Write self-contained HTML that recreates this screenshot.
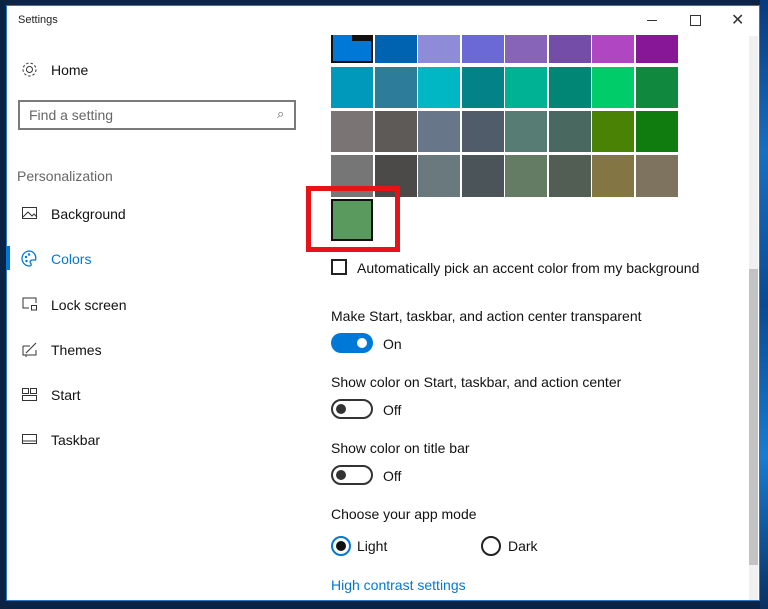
<!DOCTYPE html><html><head><style>
body{margin:0;width:768px;height:609px;background:#0b2446;position:relative;overflow:hidden;font-family:"Liberation Sans",sans-serif;}
#win{position:absolute;left:6px;top:5px;width:754px;height:596px;background:#fff;border:1px solid #2b78c9;box-sizing:border-box;}
.a{position:absolute;white-space:nowrap;}
.sw{position:absolute;width:42px;height:42px;}
.t{font-size:14px;color:#111;}
</style></head><body>
<div style="position:absolute;right:0;top:0;width:8px;height:609px;background:linear-gradient(#0a3a7a,#1a6fc0,#0b4a90,#1a7cd0,#0a3060)"></div>
<div id="win"></div>
<div class="a" style="left:18px;top:14px;font-size:11px;color:#222">Settings</div>
<div class="a" style="left:647px;top:20px;width:10px;height:1px;background:#333"></div>
<div class="a" style="left:690px;top:15px;width:9px;height:9px;border:1px solid #333"></div>
<div class="a" style="left:731px;top:10px;font-size:16px;color:#333">✕</div>
<svg class="a" style="left:21px;top:61px" width="17" height="17" viewBox="0 0 17 17"><circle cx="8.5" cy="8.5" r="3" fill="none" stroke="#333"/><circle cx="8.5" cy="8.5" r="6.5" fill="none" stroke="#333" stroke-dasharray="2.5 2"/></svg>
<div class="a t" style="left:51px;top:62px">Home</div>
<div class="a" style="left:18px;top:100px;width:278px;height:30px;border:2px solid #7a7a7a;box-sizing:border-box"></div>
<div class="a" style="left:29px;top:107px;font-size:14px;color:#666">Find a setting</div>
<div class="a" style="left:277px;top:106px;font-size:13px;color:#666">⌕</div>
<div class="a" style="left:17px;top:168px;font-size:14px;color:#666">Personalization</div>
<svg class="a" style="left:22px;top:207px" width="16" height="13"><rect x="0.5" y="0.5" width="14" height="11" fill="none" stroke="#333"/><path d="M1 10l5-5 4 4 2-2 3 3" fill="none" stroke="#333"/></svg>
<div class="a t" style="left:51px;top:206px">Background</div>
<div class="a" style="left:6px;top:246px;width:4px;height:24px;background:#0078d7"></div>
<svg class="a" style="left:21px;top:250px" width="17" height="17"><path d="M8.5 1a7.5 7.5 0 1 0 0 15c2 0 2-2 1-3s0-3 2-3h3a7 7 0 0 0-6-9z" fill="none" stroke="#0078d7" stroke-width="1.3"/><circle cx="5" cy="7" r="1.2" fill="#0078d7"/><circle cx="8" cy="4.5" r="1.2" fill="#0078d7"/><circle cx="5.5" cy="11" r="1.2" fill="#0078d7"/></svg>
<div class="a" style="left:51px;top:251px;font-size:14px;color:#0078d7">Colors</div>
<svg class="a" style="left:22px;top:297px" width="16" height="14"><path d="M14 6V1H1v10h6" fill="none" stroke="#333"/><rect x="9.5" y="8.5" width="5" height="4.5" fill="none" stroke="#333"/></svg>
<div class="a t" style="left:51px;top:297px">Lock screen</div>
<svg class="a" style="left:22px;top:342px" width="16" height="15"><path d="M1 4h7M1 4v9h13V8M4 13v2M4 11l3-3 7-7" fill="none" stroke="#333"/></svg>
<div class="a t" style="left:51px;top:342px">Themes</div>
<svg class="a" style="left:22px;top:388px" width="16" height="14"><rect x="0.5" y="0.5" width="6" height="5" fill="none" stroke="#333"/><rect x="8.5" y="0.5" width="6" height="5" fill="none" stroke="#333"/><rect x="0.5" y="7.5" width="14" height="5" fill="none" stroke="#333"/></svg>
<div class="a t" style="left:51px;top:387px">Start</div>
<svg class="a" style="left:22px;top:434px" width="16" height="11"><rect x="0.5" y="0.5" width="14" height="9" fill="none" stroke="#333"/><path d="M1 7h13" stroke="#333"/></svg>
<div class="a t" style="left:51px;top:432px">Taskbar</div>

<div id="grid"></div>
<div class="a" style="left:306px;top:186px;width:94px;height:66px;border:5px solid #e8131a;box-sizing:border-box"></div>
<div class="sw" style="left:331px;top:199px;background:#5a9a5f;border:2px solid #111;box-sizing:border-box"></div>
<div class="a" style="left:331px;top:259px;width:16px;height:16px;border:2px solid #222;box-sizing:border-box"></div>
<div class="a t" style="left:357px;top:260px">Automatically pick an accent color from my background</div>
<div class="a t" style="left:331px;top:308px">Make Start, taskbar, and action center transparent</div>
<div class="a" style="left:331px;top:333px;width:42px;height:20px;border-radius:10px;background:#0078d7"></div>
<div class="a" style="left:357px;top:338px;width:10px;height:10px;border-radius:5px;background:#fff"></div>
<div class="a t" style="left:383px;top:336px">On</div>
<div class="a t" style="left:331px;top:374px">Show color on Start, taskbar, and action center</div>
<div class="a" style="left:331px;top:399px;width:42px;height:20px;border-radius:10px;border:2px solid #333;box-sizing:border-box"></div>
<div class="a" style="left:336px;top:404px;width:10px;height:10px;border-radius:5px;background:#333"></div>
<div class="a t" style="left:383px;top:402px">Off</div>
<div class="a t" style="left:331px;top:440px">Show color on title bar</div>
<div class="a" style="left:331px;top:465px;width:42px;height:20px;border-radius:10px;border:2px solid #333;box-sizing:border-box"></div>
<div class="a" style="left:336px;top:470px;width:10px;height:10px;border-radius:5px;background:#333"></div>
<div class="a t" style="left:383px;top:468px">Off</div>
<div class="a t" style="left:331px;top:506px">Choose your app mode</div>
<div class="a" style="left:331px;top:536px;width:20px;height:20px;border-radius:10px;border:2px solid #0078d7;box-sizing:border-box"></div>
<div class="a" style="left:336px;top:541px;width:10px;height:10px;border-radius:5px;background:#111"></div>
<div class="a t" style="left:357px;top:538px">Light</div>
<div class="a" style="left:481px;top:536px;width:20px;height:20px;border-radius:10px;border:2px solid #222;box-sizing:border-box"></div>
<div class="a t" style="left:508px;top:538px">Dark</div>
<div class="a" style="left:331px;top:577px;font-size:14px;color:#0078d7">High contrast settings</div>
<div class="a" style="left:749px;top:36px;width:9px;height:564px;background:#f0f0f0"></div>
<div class="a" style="left:749px;top:269px;width:9px;height:296px;background:#c2c2c2"></div>
<script>
var c=[["#0078d7","#0063b1","#8e8cd8","#6b69d6","#8764b8","#744da9","#b146c2","#881798"],
["#0099bc","#2d7d9a","#00b7c3","#038387","#00b294","#018574","#00cc6a","#10893e"],
["#7a7574","#5d5a58","#68768a","#515c6b","#567c73","#486860","#498205","#107c10"],
["#767676","#4c4a48","#69797e","#4a5459","#647c64","#525e54","#847545","#7e735f"]];
var tops=[35,67,111,155],hs=[28,41,41,42],h="";
for(var r=0;r<4;r++)for(var i=0;i<8;i++){var s="left:"+(331+i*43.5)+"px;top:"+tops[r]+"px;height:"+hs[r]+"px;background:"+c[r][i];
if(r==0&&i==0)s+=";border:2px solid #111;border-top:none;box-sizing:border-box";h+='<div class="sw" style="'+s+'"></div>';}
h+='<div class="a" style="left:352px;top:35px;width:21px;height:6px;background:#111"></div>';
document.getElementById("grid").innerHTML=h;
</script>
</body></html>
